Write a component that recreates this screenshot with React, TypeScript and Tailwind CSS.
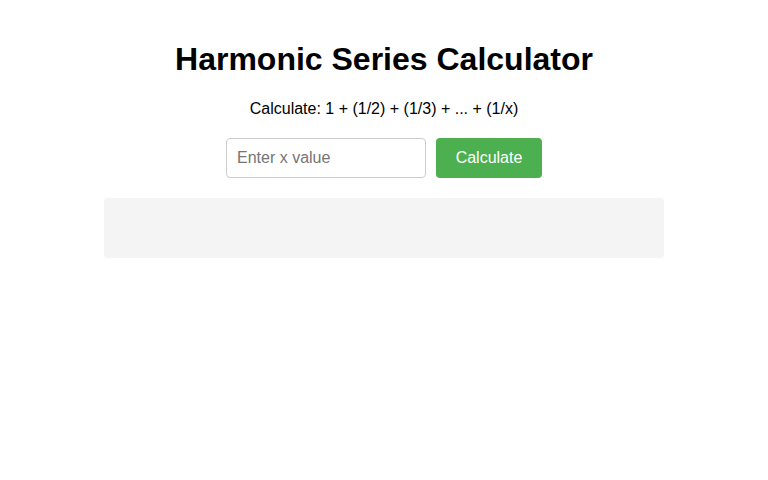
import React from "react";

export default function App() {
  return (
    <div className="min-h-[480px] bg-white text-black" style={{ fontFamily: '"Liberation Sans", Arial, sans-serif' }}>
      <div className="mx-auto max-w-[600px] p-5 text-center">
        <h1 className="mt-[21px] mb-[22px] text-[32px] font-bold leading-[37px]">Harmonic Series Calculator</h1>
        <p className="mb-4 text-base leading-[18px]">Calculate: 1 + (1/2) + (1/3) + ... + (1/x)</p>
        <div className="mt-[20px] flex justify-center gap-[10px]">
          <input
            type="number"
            placeholder="Enter x value"
            className="h-10 w-[200px] rounded border border-[#ccc] px-[10px] text-base text-black placeholder:text-[#757575] outline-none"
          />
          <button className="h-10 w-[106px] rounded bg-[#4caf50] text-base text-white">Calculate</button>
        </div>
        <div className="mt-5 h-[60px] rounded bg-[#f4f4f4]"></div>
      </div>
    </div>
  );
}
